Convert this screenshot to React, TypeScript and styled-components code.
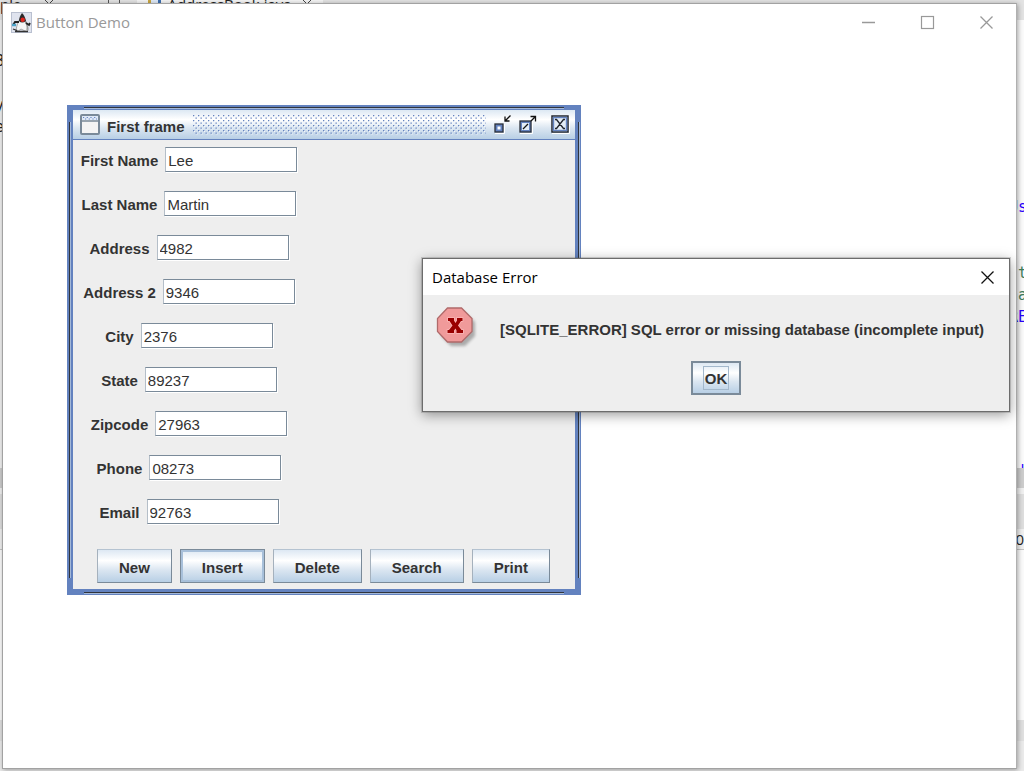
import React from "react";
import styled, { createGlobalStyle, css } from "styled-components";

const metal = {
  text: "#333333",
  panel: "#eeeeee",
  frame: "#6382bf",
  frameLight: "#a3b8d8",
  frameDark: "#30343c",
  edge: "#7a8a99",
  gradient: "linear-gradient(#dde8f3 0%, #ffffff 33%, #dbe6f1 62%, #b8cfe5 100%)",
};

const metalFont = '"Liberation Sans", Arial, sans-serif';
const systemFont = '"Open Sans", "Noto Sans", sans-serif';
const codeFont = '"DejaVu Sans Mono", monospace';

const GlobalStyle = createGlobalStyle`
  *, *::before, *::after { box-sizing: border-box; }
  body { margin: 0; background: #f9f9f9; }
  button { cursor: default; }
`;

/* ---------- code editor behind the application ---------- */

const Desktop = styled.div`
  position: relative;
  min-height: 100vh;
  overflow: hidden;
  display: flex;
`;

const Ide = styled.div`
  flex: 1;
  display: flex;
  flex-direction: column;
`;

const TabStrip = styled.div`
  height: 20px;
  display: flex;
  background: #e3e3e3;
  font: 15px/8px ${systemFont};
  color: #222;
`;

const Tab = styled.div<{ $active?: boolean; $gap: number }>`
  display: flex;
  gap: ${(p) => p.$gap}px;
  padding-right: 10px;
  background: ${(p) => (p.$active ? "#f4f4f4" : "transparent")};
`;

const TabTools = styled.div`
  width: 72px;
  display: flex;
  justify-content: flex-end;
  gap: 10px;
  padding-right: 17px;
`;

const ToolLine = styled.span`
  width: 1px;
  background: #555;
`;

const FileMark = styled.span`
  width: 13px;
  height: 12px;
  margin: 0 -3px 0 11px;
  border: 3px solid #c9a640;
  border-top: 0;
  border-right-color: #3d6fb0;
  background: #dfe9f7;
`;

const Editor = styled.div`
  height: 448px;
  display: flex;
  justify-content: space-between;
  background: #fbfbfb;
  font: 15px/22px ${codeFont};
`;

const Tree = styled.div`
  display: flex;
  flex-direction: column;
  align-items: flex-end;
  padding-top: 8px;
  width: 4px;
  background: #f0f0f0;
  color: #222;
`;

const Code = styled.div`
  padding-top: 176px;
  margin-right: -3px;
  text-align: right;
`;

const Line = styled.div<{ $color?: string }>`
  height: 22px;
  color: ${(p) => p.$color ?? "#222"};
`;

const Band = styled.div<{ $h?: number; $bg: string }>`
  ${(p) => (p.$h ? css`height: ${p.$h}px;` : css`flex: 1;`)}
  background: ${(p) => p.$bg};
`;

const Status = styled(Band)`
  display: flex;
  align-items: center;
  justify-content: flex-end;
  border-bottom: 1px solid #c4c4c4;
  font: 15px/20px ${systemFont};
  color: #222;
`;

/* ---------- main application window ---------- */

const AppWindow = styled.main`
  position: absolute;
  inset: 3px 7px 2px 2px;
  display: flex;
  flex-direction: column;
  background: #fff;
  border: 1px solid #a2a2a2;
  border-right: 1px solid #b0b0b0;
  box-shadow: 1px 1px 5px rgba(0, 0, 0, 0.35);
`;

const AppBar = styled.header`
  height: 36px;
  display: flex;
  align-items: center;
  padding: 0 22px 0 8px;
  gap: 4px;
`;

const AppTitle = styled.h1`
  flex: 1;
  margin: 0;
  font: 400 15px/20px ${systemFont};
  color: #999;
`;

const Captions = styled.div`
  display: flex;
  gap: 44px;
`;

const CaptionButton = styled.button<{ $color: string }>`
  display: flex;
  padding: 0;
  border: 0;
  background: none;
  color: ${(p) => p.$color};
`;

/* ---------- internal frame ---------- */

const Frame = styled.section`
  position: absolute;
  left: 64px;
  top: 101px;
  padding: 5px 6px 6px;
  background: ${metal.frame};
  font-family: ${metalFont};
  color: ${metal.text};

  &::before,
  &::after {
    content: "";
    position: absolute;
    pointer-events: none;
  }
  &::before {
    inset: 2px 17px;
    border: solid ${metal.frameDark};
    border-width: 1px 0;
    box-shadow: 0 1px ${metal.frameLight}, inset 0 1px ${metal.frameLight};
  }
  &::after {
    inset: 17px 2px;
    border: solid ${metal.frameDark};
    border-width: 0 1px;
    box-shadow: 1px 0 ${metal.frameLight}, inset 1px 0 ${metal.frameLight};
  }
`;

const FrameBody = styled.div`
  position: relative;
  z-index: 1;
  background: ${metal.panel};
`;

const FrameBar = styled.header`
  height: 30px;
  display: flex;
  align-items: center;
  padding: 0 5px 0 7px;
  background: ${metal.gradient};
  border-bottom: 1px solid ${metal.frame};
`;

const FrameTitle = styled.h2`
  margin: 0 8px 0 7px;
  padding-top: 4px;
  font-size: 15px;
  line-height: 18px;
`;

const BumpArea = styled.div`
  flex: 1;
  width: 0;
  min-width: 0;
  overflow: hidden;
  contain: inline-size;
  display: flex;
  margin-right: 8px;
`;

const FrameButton = styled.button<{ $gap?: number }>`
  display: flex;
  margin: 0 0 0 ${(p) => p.$gap ?? 0}px;
  padding: 0;
  border: 0;
  background: none;
`;

const Form = styled.form`
  padding: 7px 25px 6px 24px;
`;

const Fields = styled.div`
  width: 232px;
  margin-left: -24px;
  display: flex;
  flex-direction: column;
  gap: 19px;
`;

const Field = styled.label`
  display: flex;
  justify-content: center;
  align-items: center;
  gap: 7px;
  font-size: 15px;
  line-height: 18px;
  font-weight: 700;
  white-space: nowrap;
`;

const LabelText = styled.span`
  padding-top: 3px;
`;

const TextBox = styled.input`
  width: 132px;
  height: 25px;
  padding: 2px 2px 0;
  border: 1px solid ${metal.edge};
  border-left-color: #b4bec8;
  border-radius: 0;
  outline: 0;
  background: #fff;
  box-shadow: 1px 1px #fff;
  font: 15px/18px ${metalFont};
  color: ${metal.text};
`;

const Actions = styled.div`
  display: flex;
  gap: 8px;
  margin-top: 25px;
`;

const MetalButton = styled.button<{ $strong?: boolean; $tight?: boolean }>`
  height: 34px;
  padding: ${(p) => (p.$tight ? "0 10px" : "4px 21px 0")};
  border: 1px solid ${metal.edge};
  border-left-color: #a5b1bd;
  border-top-color: #b5c3d1;
  border-radius: 0;
  outline: 0;
  background: ${metal.gradient};
  font: 700 15px/18px ${metalFont};
  color: ${metal.text};
  ${(p) =>
    p.$strong &&
    css`
      border-color: ${metal.edge};
      box-shadow: inset 0 0 0 2px #a8c0da;
    `}
  ${(p) =>
    p.$tight &&
    css`
      border: 2px solid ${metal.edge};
    `}
`;

const FocusRing = styled.span`
  display: block;
  padding: 3px 1px 1px;
  border: 1px solid #a3b8cc;
`;

/* ---------- error dialog ---------- */

const Dialog = styled.section`
  position: absolute;
  z-index: 2;
  right: 14px;
  top: 258px;
  border: 1px solid #6c6c6c;
  outline: 1px solid rgba(90, 90, 90, 0.25);
  background: ${metal.panel};
  box-shadow: 0 3px 12px rgba(0, 0, 0, 0.4);
`;

const DialogBar = styled.header`
  height: 36px;
  display: flex;
  align-items: center;
  justify-content: space-between;
  padding: 0 14px 0 9px;
  background: #fff;
`;

const DialogTitle = styled.h2`
  margin: 0;
  font: 400 15px/20px ${systemFont};
  color: #000;
`;

const Message = styled.div`
  display: flex;
  align-items: flex-start;
  gap: 22px;
  padding: 12px 25px 0 13px;
`;

const MessageText = styled.p`
  margin: 0;
  padding-top: 14px;
  font: 700 15px/18px ${metalFont};
  color: ${metal.text};
  white-space: nowrap;
`;

const DialogActions = styled.div`
  display: flex;
  justify-content: center;
  padding: 11px 0 16px;
`;

/* ---------- drawings ---------- */

const DukeIcon = () => (
  <svg width="21" height="21" viewBox="0 0 21 21" aria-hidden="true">
    <rect width="21" height="21" fill="#dfe3ee" />
    <rect x=".5" y=".5" width="20" height="20" fill="none" stroke="#b9c0d0" />
    <path d="M10 6 C7 9 6 13 5 18 Q8 20 10 17 L14 19 Q18 20 17 16 C16 12 15 9 13 6Z" fill="#f4f4f4" stroke="#888" strokeWidth=".7" />
    <path d="M14 9 C16 12 17 15 16 18" fill="none" stroke="#999" strokeWidth="1.500" />
    <path d="M11 1 C9 4 8 6 8 9 Q11 12 15 9 C14 5 13 3 11 1Z" fill="#2a2a2a" />
    <circle cx="11.700" cy="7.800" r="2.200" fill="#e0241d" />
    <path d="M8 10 L4 10 L2 13 M15 11 L18 13 L19 11" fill="none" stroke="#222" strokeWidth="1.800" />
    <path d="M1 13 L5 13" stroke="#4da3c8" strokeWidth="2.500" />
    <path d="M2 17 L6 18.500 M4 19.500 H17" stroke="#333" strokeWidth="1.300" />
  </svg>
);

const MinimizeGlyph = () => (
  <svg width="15" height="15" viewBox="0 0 15 15" aria-hidden="true">
    <path d="M1 7.500 H14" stroke="currentColor" strokeWidth="1.500" />
  </svg>
);

const MaximizeGlyph = () => (
  <svg width="15" height="15" viewBox="0 0 15 15" aria-hidden="true">
    <rect x="1.500" y="1.500" width="12" height="12" fill="none" stroke="currentColor" strokeWidth="1.200" />
  </svg>
);

const CloseGlyph = () => (
  <svg width="15" height="15" viewBox="0 0 15 15" aria-hidden="true">
    <path d="M1.500 1.500 L13.500 13.500 M13.500 1.500 L1.500 13.500" stroke="currentColor" strokeWidth="1.300" />
  </svg>
);

const FrameIcon = () => (
  <svg width="20" height="21" viewBox="0 0 20 21" aria-hidden="true">
    <rect x="1" y="1" width="18" height="19" rx="1" fill="#f4f4f4" stroke={metal.edge} strokeWidth="2" />
    <rect x="2" y="2" width="16" height="4" fill="#dfe9f7" />
    <path d="M3 3.500 H17 M5 5 H17" stroke={metal.frame} strokeWidth="1" strokeDasharray="1.200 2.500" />
    <path d="M2 7 H18" stroke={metal.edge} strokeWidth="1.500" />
  </svg>
);

const Bumps = () => (
  <svg width="100%" height="20" aria-hidden="true">
    <defs>
      <pattern id="bumps" width="5" height="5" patternUnits="userSpaceOnUse">
        <path d="M1 1 h1 v1 h-1z M3.500 3.500 h1 v1 h-1z" fill="#fff" />
        <path d="M0 0 h1.300 v1.300 h-1.300z M2.500 2.500 h1.300 v1.300 h-1.300z" fill={metal.frame} />
      </pattern>
    </defs>
    <rect width="100%" height="20" fill="url(#bumps)" />
  </svg>
);

const IconifyGlyph = () => (
  <svg width="18" height="20" viewBox="0 0 18 20" aria-hidden="true">
    <path d="M1 18.500 H10.500 V9" fill="none" stroke="#fff" />
    <rect x="1" y="9" width="8" height="8" fill="#6382bf" stroke="#2a2e38" strokeWidth="1.300" />
    <rect x="3.500" y="11.500" width="3" height="3" fill="#fff" />
    <path d="M16.500 0.500 L11.500 5.500 M11 1.500 V6 H15.500" fill="none" stroke="#111" strokeWidth="1.300" />
  </svg>
);

const GrowGlyph = () => (
  <svg width="18" height="20" viewBox="0 0 18 20" aria-hidden="true">
    <path d="M1 18.500 H13.500 V6" fill="none" stroke="#fff" />
    <rect x="1" y="6" width="11" height="11" fill="#6382bf" stroke="#2a2e38" strokeWidth="1.300" />
    <rect x="3" y="8" width="7" height="7" fill="#e4edf6" />
    <path d="M4 14 L9 9 M12 6 L16 2 M11.500 1.500 H16.500 V6.500" fill="none" stroke="#111" strokeWidth="1.300" />
  </svg>
);

const FrameCloseGlyph = () => (
  <svg width="19" height="20" viewBox="0 0 19 20" aria-hidden="true">
    <path d="M1 18.500 H18.500 V1" fill="none" stroke="#fff" />
    <rect x="1" y="1" width="16" height="16" fill="#e4edf6" stroke="#22262e" strokeWidth="1.500" />
    <rect x="2.500" y="2.500" width="13" height="13" fill="none" stroke="#6382bf" strokeWidth="1.400" />
    <path d="M4 4.500 H5.500 L12.500 13.500 H14 M14 4.500 H12.500 L5.500 13.500 H4" fill="none" stroke="#22262e" strokeWidth="1.300" />
  </svg>
);

const ErrorIcon = () => (
  <svg width="42" height="43" viewBox="0 0 42 43" aria-hidden="true">
    <defs>
      <filter id="soft" x="-20%" y="-20%" width="140%" height="140%">
        <feGaussianBlur stdDeviation="1.500" />
      </filter>
    </defs>
    <path d="M14 5 H28 L39 15 V29 L29 39 H15 L5 29 V15Z" fill="#aaa" filter="url(#soft)" />
    <path d="M11.500 1 H25.500 L36 11.500 V24.500 L25.500 35 H11.500 L1.500 24.500 V11.500Z" fill="#f09a9a" stroke="#b06a6a" strokeWidth="1.300" />
    <path
      d="M12 11 H18 V13.500 L19.500 16 L21 13.500 V11 H26.500 V14 H25 L22 18.500 L25.500 23 H27 V26 H20.500 V23.500 L19.500 21.500 L18 23.500 V26 H11.500 V23 H13 L16.500 18.500 L13.500 14 H12Z"
      fill="#990000"
      stroke="#fbb8b8"
      strokeWidth="1.500"
      paintOrder="stroke"
    />
  </svg>
);

const Chevron = () => (
  <svg width="12" height="6" viewBox="0 0 12 6" aria-hidden="true">
    <path d="M1 -1 L6 4 L11 -1" fill="none" stroke="#444" />
  </svg>
);

/* ---------- content ---------- */

const fields: [string, string, string][] = [
  ["firstName", "First Name", "Lee"],
  ["lastName", "Last Name", "Martin"],
  ["address", "Address", "4982"],
  ["address2", "Address 2", "9346"],
  ["city", "City", "2376"],
  ["state", "State", "89237"],
  ["zipcode", "Zipcode", "27963"],
  ["phone", "Phone", "08273"],
  ["email", "Email", "92763"],
];

const actions = ["New", "Insert", "Delete", "Search", "Print"];

const treeLines = ["", "B", "", "y", "e"];

const codeLines: [string, string?][] = [
  ["Us", "#2a00ff"],
  [""],
  [""],
  ["t ", "#3f7f5f"],
  ["na", "#3f7f5f"],
  ["RE", "#2a00ff"],
  [""],
  [""],
  [""],
  [""],
  [""],
  [""],
  ["'", "#2a00ff"],
];

function Backdrop() {
  return (
    <Ide aria-hidden="true">
      <TabStrip>
        <Tab $gap={22}>
          ple <Chevron />
        </Tab>
        <TabTools>
          <ToolLine />
          <ToolLine />
        </TabTools>
        <Tab $active $gap={9}>
          <FileMark />
          AddressBook.java <Chevron />
        </Tab>
      </TabStrip>
      <Editor>
        <Tree>
          {treeLines.map((t, i) => (
            <Line key={i}>{t}</Line>
          ))}
        </Tree>
        <Code>
          {codeLines.map(([t, color], i) => (
            <Line key={i} $color={color}>
              {t}
            </Line>
          ))}
        </Code>
      </Editor>
      <Band $h={20} $bg="#cdcdcd" />
      <Band $h={6} $bg="#f0f0f0" />
      <Band $h={35} $bg="#dedede" />
      <Status $h={21} $bg="#f0f0f0">
        0
      </Status>
      <Band $h={170} $bg="#fbfbfb" />
      <Band $h={21} $bg="#e0e0e0" />
      <Band $bg="#ebebeb" />
    </Ide>
  );
}

function AddressFrame() {
  return (
    <Frame aria-label="First frame">
      <FrameBody>
        <FrameBar>
          <FrameIcon />
          <FrameTitle>First frame</FrameTitle>
          <BumpArea>
            <Bumps />
          </BumpArea>
          <FrameButton aria-label="Iconify">
            <IconifyGlyph />
          </FrameButton>
          <FrameButton aria-label="Maximize frame" $gap={7}>
            <GrowGlyph />
          </FrameButton>
          <FrameButton aria-label="Close frame" $gap={14}>
            <FrameCloseGlyph />
          </FrameButton>
        </FrameBar>
        <Form onSubmit={(e) => e.preventDefault()}>
          <Fields>
            {fields.map(([id, label, value]) => (
              <Field key={id} htmlFor={id}>
                <LabelText>{label}</LabelText>
                <TextBox id={id} type="text" defaultValue={value} />
              </Field>
            ))}
          </Fields>
          <Actions>
            {actions.map((a) => (
              <MetalButton key={a} type="button" $strong={a === "Insert"}>
                {a}
              </MetalButton>
            ))}
          </Actions>
        </Form>
      </FrameBody>
    </Frame>
  );
}

function ErrorDialog() {
  return (
    <Dialog role="alertdialog" aria-labelledby="dialog-title" aria-describedby="dialog-text">
      <DialogBar>
        <DialogTitle id="dialog-title">Database Error</DialogTitle>
        <CaptionButton aria-label="Close dialog" $color="#111">
          <CloseGlyph />
        </CaptionButton>
      </DialogBar>
      <Message>
        <ErrorIcon />
        <MessageText id="dialog-text">
          [SQLITE_ERROR] SQL error or missing database (incomplete input)
        </MessageText>
      </Message>
      <DialogActions>
        <MetalButton type="button" $tight>
          <FocusRing>OK</FocusRing>
        </MetalButton>
      </DialogActions>
    </Dialog>
  );
}

export default function App() {
  return (
    <Desktop>
      <GlobalStyle />
      <Backdrop />
      <AppWindow>
        <AppBar>
          <DukeIcon />
          <AppTitle>Button Demo</AppTitle>
          <Captions>
            <CaptionButton aria-label="Minimize" $color="#999">
              <MinimizeGlyph />
            </CaptionButton>
            <CaptionButton aria-label="Maximize" $color="#999">
              <MaximizeGlyph />
            </CaptionButton>
            <CaptionButton aria-label="Close" $color="#999">
              <CloseGlyph />
            </CaptionButton>
          </Captions>
        </AppBar>
        <AddressFrame />
      </AppWindow>
      <ErrorDialog />
    </Desktop>
  );
}
